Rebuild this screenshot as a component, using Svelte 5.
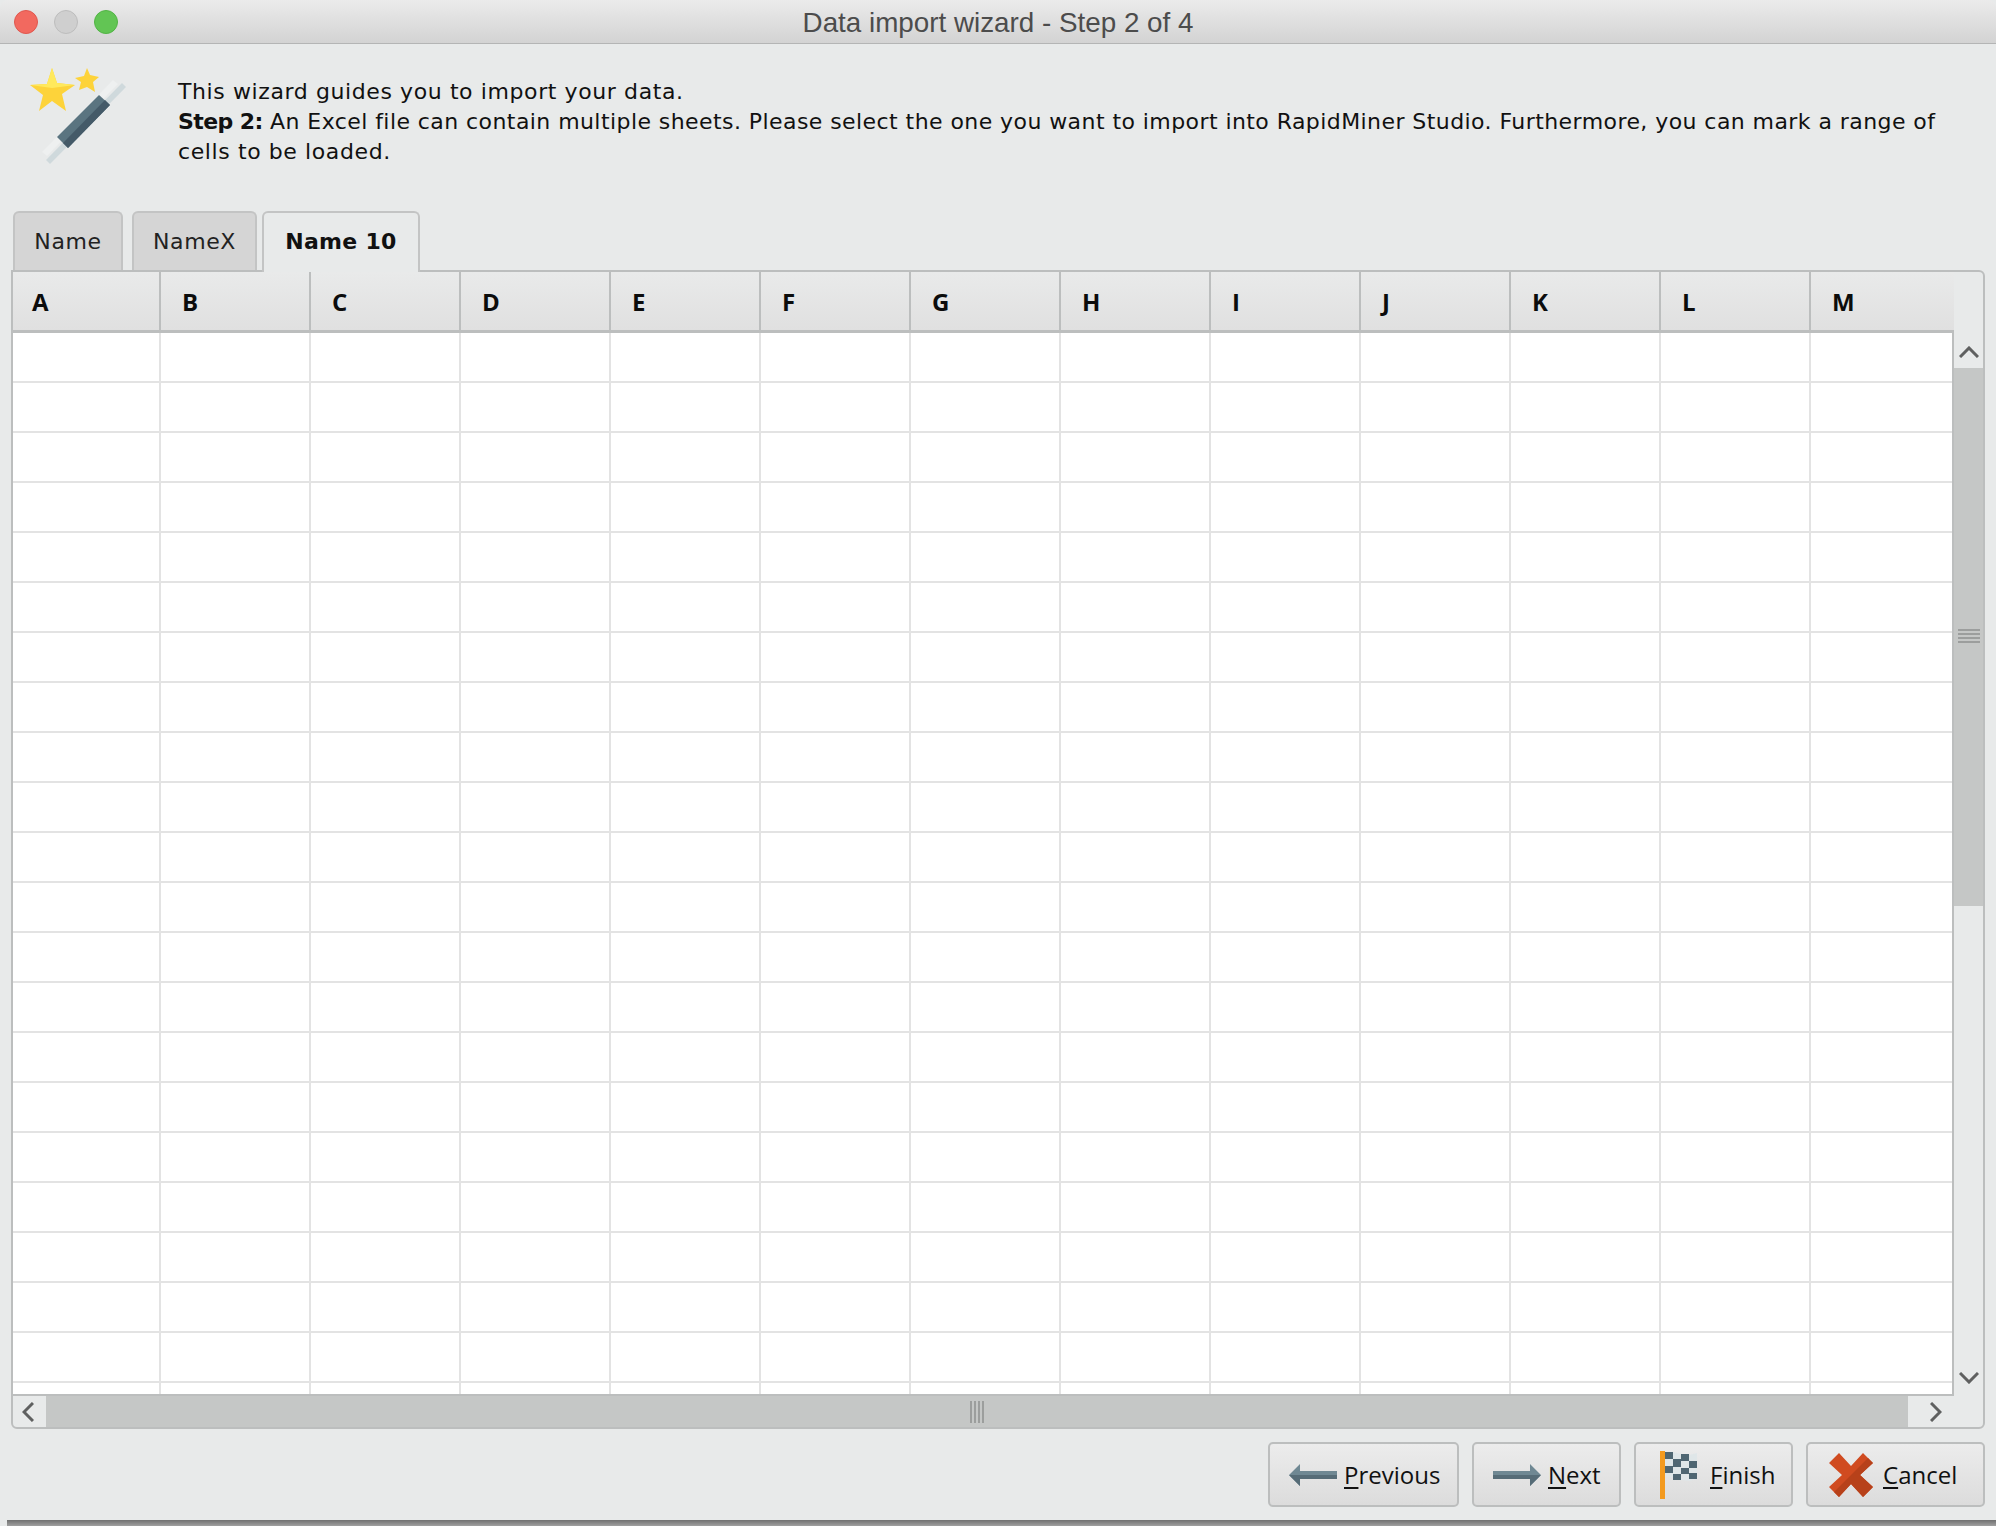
<script>
  const columns = ['A', 'B', 'C', 'D', 'E', 'F', 'G', 'H', 'I', 'J', 'K', 'L', 'M'];
  const rows = Array.from({ length: 22 }, (_, i) => i);
  const tabs = [
    { label: 'Name', active: false },
    { label: 'NameX', active: false },
    { label: 'Name 10', active: true }
  ];
</script>

<div class="window">
  <header class="titlebar">
    <div class="lights">
      <span class="light red"></span>
      <span class="light grey"></span>
      <span class="light green"></span>
    </div>
    <span class="title">Data import wizard - Step 2 of 4</span>
  </header>

  <section class="intro">
    <svg class="wand" viewBox="0 0 100 100" width="100" height="100">
      <path d="M14 86 L85 14 L90 18 L19 90 Z" fill="#eef0f0" />
      <path d="M18 94 L94 17 L98 21 L22 98 Z" fill="#cfd9dc" />
      <path d="M29 71 L71 29 L82 39 L40 82 Z" fill="#5a7480" />
      <path d="M35 77 L77 34 L82 39 L40 82 Z" fill="#445a68" />
      <path d="M24 2 L29 17 L47 19 L34 28 L38 45 L24 35 L11 45 L15 29 L2 19 L19 18 Z" fill="#fdd33a" />
      <path d="M24 2 L29 17 L47 19 L24 22 L2 19 L19 18 Z" fill="#ffe95c" />
      <path d="M59 2 L62 9 L71 11 L65 16 L67 26 L59 21 L51 24 L53 16 L47 12 L56 10 Z" fill="#fdd33a" />
    </svg>
    <p class="message">
      <span class="loose">This wizard guides you to import your data.</span><br />
      <span class="main"><strong>Step 2:</strong> An Excel file can contain multiple sheets. Please select the one you want to import into RapidMiner Studio. Furthermore, you can mark a range of</span><br />
      <span class="loose">cells to be loaded.</span>
    </p>
  </section>

  <nav class="tabs">
    {#each tabs as tab}
      <div class="tab" class:active={tab.active}>{tab.label}</div>
    {/each}
  </nav>

  <section class="sheet">
    <div class="table">
      <div class="head">
        {#each columns as col}
          <div class="head-cell">{col}</div>
        {/each}
      </div>
      <div class="body">
        {#each rows as row (row)}
          <div class="row">
            {#each columns as col}
              <div class="cell"></div>
            {/each}
          </div>
        {/each}
      </div>
    </div>

    <div class="vscroll">
      <div class="v-end top">
        <svg viewBox="0 0 20 12" width="20" height="12"><path d="M1 11 L10 2 L19 11" /></svg>
      </div>
      <div class="v-thumb">
        <div class="v-grip"><i></i><i></i><i></i><i></i></div>
      </div>
      <div class="v-end bottom">
        <svg viewBox="0 0 20 12" width="20" height="12"><path d="M1 1 L10 10 L19 1" /></svg>
      </div>
    </div>

    <div class="hscroll">
      <div class="h-end left">
        <svg viewBox="0 0 12 20" width="12" height="20"><path d="M11 1 L2 10 L11 19" /></svg>
      </div>
      <div class="h-thumb">
        <div class="h-grip"><i></i><i></i><i></i><i></i></div>
      </div>
      <div class="h-end right">
        <svg viewBox="0 0 12 20" width="12" height="20"><path d="M1 1 L10 10 L1 19" /></svg>
      </div>
    </div>
  </section>

  <footer class="actions">
    <button class="prev">
      <svg viewBox="0 0 48 22" width="48" height="22"><path d="M0 11 L11 0 V7 H48 V15 H11 V22 Z" fill="#6f8893" /><path d="M0 11 H48 V15 H11 V22 Z" fill="#566c77" /></svg>
      <span><u>P</u>revious</span>
    </button>
    <button class="next">
      <svg viewBox="0 0 48 22" width="48" height="22"><path d="M48 11 L37 0 V7 H0 V15 H37 V22 Z" fill="#6f8893" /><path d="M48 11 H0 V15 H37 V22 Z" fill="#566c77" /></svg>
      <span><u>N</u>ext</span>
    </button>
    <button class="finish">
      <svg viewBox="0 0 38 48" width="38" height="48">
        <rect x="0" y="0" width="5" height="48" fill="#f39a1f" />
        <path d="M5 1 L13 1 L21 3 L29 4 L37 2 L37 28 L29 30 L21 29 L13 27 L5 25 Z" fill="#dfe6e8" />
        <path d="M5 1 h8 v7 h-8z M21 3 h8 v7 h-8z M13 8 h8 v8 h-8z M29 10 h8 v7 h-8z M5 15 h8 v7 h-8z M21 17 h8 v6 h-8z M13 23 h8 v6 h-8z M29 22 h8 v6 h-8z" fill="#4f6672" />
      </svg>
      <span><u>F</u>inish</span>
    </button>
    <button class="cancel">
      <svg viewBox="0 0 44 44" width="44" height="44">
        <path d="M10 0 L22 13 L34 0 L44 10 L31 22 L44 34 L34 44 L22 31 L10 44 L0 34 L13 22 L0 10 Z" fill="#d04b20" />
        <path d="M39 5 L44 10 L31 22 L44 34 L34 44 L22 31 L10 44 L5 39 Z" fill="#b7411a" />
      </svg>
      <span><u>C</u>ancel</span>
    </button>
  </footer>

  <div class="desktop-edge"></div>
</div>

<style>
  :global(body) {
    margin: 0;
    background: #e8eaea;
  }

  .window {
    width: 1996px;
    height: 1526px;
    display: flex;
    flex-direction: column;
    background: #e8eaea;
    overflow: hidden;
    font-family: "DejaVu Sans", sans-serif;
    color: #111;
  }

  .titlebar {
    height: 44px;
    flex: none;
    box-sizing: border-box;
    padding-top: 2px;
    display: flex;
    align-items: center;
    justify-content: center;
    position: relative;
    border-bottom: 1px solid #b4b5b5;
    border-radius: 8px 8px 0 0;
    background: linear-gradient(#ebebeb, #d3d3d3);
  }

  .title {
    font-family: "Liberation Sans", sans-serif;
    font-size: 27.8px;
    color: #4c4c4c;
  }

  .lights {
    position: absolute;
    left: 14px;
    top: 10px;
    display: flex;
    gap: 16px;
  }

  .light {
    width: 24px;
    height: 24px;
    border-radius: 50%;
    box-sizing: border-box;
    border: 1px solid transparent;
  }

  .red { background: #f2695f; border-color: #e0574e; }
  .grey { background: #cfcfcf; border-color: #bdbdbd; }
  .green { background: #62c554; border-color: #52b445; }

  .intro {
    height: 167px;
    flex: none;
    display: flex;
    box-sizing: border-box;
    padding: 22px 0 0 28px;
  }

  .wand {
    flex: none;
  }

  .message {
    margin: 11px 0 0 50px;
    font-size: 22px;
    line-height: 30px;
    white-space: nowrap;
  }

  .loose {
    letter-spacing: 0.6px;
  }

  .main {
    letter-spacing: 0.43px;
  }

  strong {
    letter-spacing: -0.6px;
  }

  .tabs {
    flex: none;
    display: flex;
    height: 59px;
    padding-left: 13px;
    gap: 9px;
  }

  .tab {
    width: 110px;
    box-sizing: border-box;
    border: 2px solid #c3c4c4;
    border-bottom: none;
    border-radius: 6px 6px 0 0;
    background: #d5d5d5;
    font-size: 22px;
    letter-spacing: 0.6px;
    display: flex;
    align-items: center;
    justify-content: center;
    color: #222;
  }

  .tab:nth-child(2) { width: 125px; }

  .tab.active {
    width: 158px;
    margin-left: -4px;
    height: 61px;
    padding-bottom: 2px;
    background: #e8eaea;
    font-weight: bold;
    letter-spacing: 0.3px;
    color: #111;
    position: relative;
    z-index: 1;
  }

  .sheet {
    flex: none;
    margin-left: 11px;
    width: 1974px;
    height: 1159px;
    box-sizing: border-box;
    border: 2px solid #bcbebe;
    border-radius: 0 6px 6px 6px;
    display: grid;
    grid-template-columns: 1941px 1fr;
    grid-template-rows: 1124px 1fr;
  }

  .table {
    display: flex;
    flex-direction: column;
    overflow: hidden;
    background: #fff;
    border-bottom: 2px solid #bcbebe;
    box-sizing: border-box;
  }

  .head {
    display: flex;
    height: 61px;
    flex: none;
    box-sizing: border-box;
    border-bottom: 3px solid #bcbebe;
    background: linear-gradient(#e9eaea, #e0e0e0);
  }

  .head-cell {
    flex: none;
    width: 150px;
    box-sizing: border-box;
    border-right: 2px solid #bcbebe;
    padding-left: 21px;
    display: flex;
    align-items: center;
    font-family: "Open Sans", sans-serif;
    font-weight: 700;
    font-size: 24px;
    color: #0c0c0c;
  }

  .head-cell:first-child { width: 148px; padding-left: 19px; }
  .head-cell:last-child { border-right: none; }

  .body {
    flex: 1;
    overflow: hidden;
    border-right: 2px solid #bcbebe;
  }

  .row {
    display: flex;
    height: 50px;
    box-sizing: border-box;
    border-bottom: 2px solid #e3e3e3;
  }

  .cell {
    flex: none;
    width: 150px;
    box-sizing: border-box;
    border-right: 2px solid #e3e3e3;
  }

  .cell:first-child { width: 148px; }
  .cell:last-child { border-right: none; }

  .vscroll {
    display: flex;
    flex-direction: column;
  }

  .v-end {
    display: flex;
    justify-content: center;
  }

  .v-end.top {
    height: 96px;
    flex: none;
    align-items: flex-end;
    padding-bottom: 10px;
    box-sizing: border-box;
  }

  .v-end.bottom {
    flex: 1;
    align-items: flex-end;
    padding-bottom: 12px;
    box-sizing: border-box;
  }

  .v-thumb {
    height: 538px;
    flex: none;
    background: #c5c7c6;
    display: flex;
    align-items: center;
    justify-content: center;
  }

  .v-grip {
    display: flex;
    flex-direction: column;
    gap: 2px;
    width: 22px;
    transform: translateY(-1px);
  }

  .v-grip i {
    height: 2px;
    background: #9c9e9d;
  }

  .hscroll {
    grid-column: 1 / 3;
    display: flex;
  }

  .h-end {
    display: flex;
    align-items: center;
    flex: none;
  }

  .h-end.left {
    width: 33px;
    padding-left: 9px;
    box-sizing: border-box;
  }

  .h-end.right {
    flex: 1;
    padding-left: 22px;
  }

  .h-thumb {
    width: 1862px;
    flex: none;
    background: #c5c7c6;
    display: flex;
    align-items: center;
    justify-content: center;
  }

  .h-grip {
    display: flex;
    gap: 2px;
    height: 22px;
  }

  .h-grip i {
    width: 2px;
    background: #9c9e9d;
  }

  .v-end path,
  .h-end path {
    fill: none;
    stroke: #5f6060;
    stroke-width: 3;
  }

  .actions {
    flex: none;
    display: flex;
    justify-content: flex-end;
    gap: 13px;
    padding: 13px 11px 0 0;
    height: 91px;
    box-sizing: border-box;
  }

  button {
    height: 65px;
    box-sizing: border-box;
    border: 2px solid #bcbebe;
    border-radius: 5px;
    background: linear-gradient(#ececec, #dcdcdc);
    display: flex;
    align-items: center;
    padding: 0 0 0 19px;
    gap: 7px;
    font-family: "Open Sans", sans-serif;
    font-size: 24px;
    color: #111;
  }

  .prev { width: 191px; }
  .next { width: 149px; }
  .finish { width: 159px; padding-left: 24px; gap: 12px; }
  .cancel { width: 179px; padding-left: 21px; gap: 10px; }

  u {
    text-underline-offset: 3px;
    text-decoration-thickness: 2px;
  }

  .desktop-edge {
    flex: 1;
    margin-left: 7px;
    background: linear-gradient(#707070, #a0a0a0);
  }
</style>
